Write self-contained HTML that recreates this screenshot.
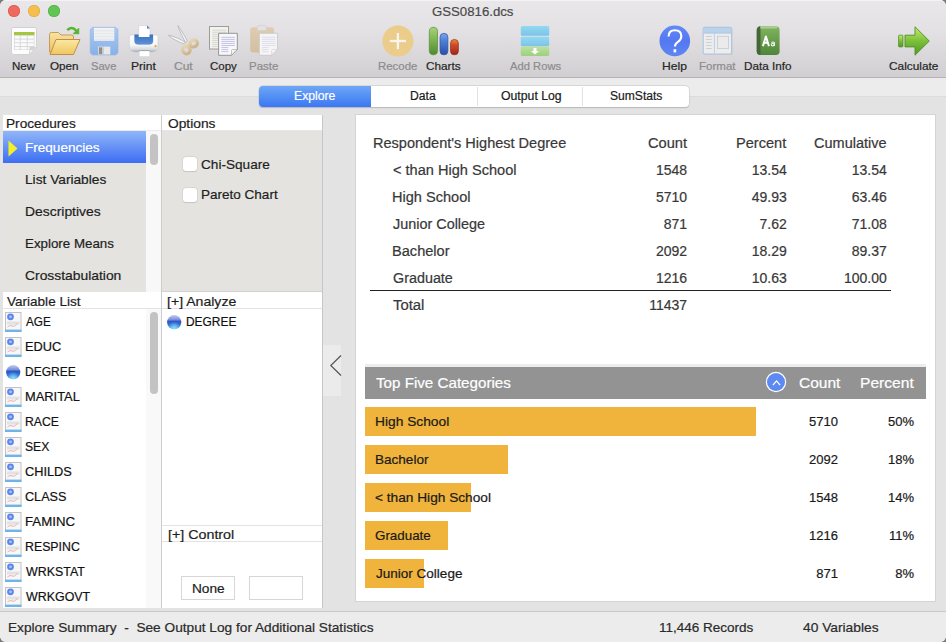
<!DOCTYPE html>
<html><head><meta charset="utf-8"><style>
html,body{margin:0;padding:0;width:946px;height:642px;overflow:hidden;background:#7a7a7a;font-family:"Liberation Sans", sans-serif;}
#win{position:absolute;left:0;top:0;width:946px;height:642px;border-radius:6px;overflow:hidden;background:#e3e3e3;}
.t{position:absolute;white-space:pre;font-family:"Liberation Sans", sans-serif;-webkit-text-stroke:0.2px currentColor;}
.r{position:absolute;}
</style></head><body><div id="win">
<div class="r" style="left:0px;top:0px;width:946px;height:77px;background:linear-gradient(#e9e7e9 0%,#e3e1e3 40%,#d1cfd1 100%);"></div>
<div class="r" style="left:0px;top:0px;width:946px;height:1px;background:#f3f3f3;"></div>
<div class="r" style="left:0px;top:77px;width:946px;height:1px;background:#b4b2b4;"></div>
<div class="r" style="left:0px;top:78px;width:946px;height:18px;background:#ececec;"></div>
<div class="r" style="left:0px;top:96px;width:946px;height:1px;background:#dcdcdc;"></div>
<div class="r" style="left:0px;top:97px;width:946px;height:514px;background:#e3e3e3;"></div>
<div class="r" style="left:0px;top:611px;width:946px;height:1px;background:#c9c9c9;"></div>
<div class="r" style="left:0px;top:612px;width:946px;height:30px;background:#ececec;"></div>
<div class="r" style="left:7.800000000000001px;top:5px;width:12px;height:12px;border-radius:50%;background:#ee6a5e;box-shadow:inset 0 0 0 0.5px #d5544a"></div>
<div class="r" style="left:27.799999999999997px;top:5px;width:12px;height:12px;border-radius:50%;background:#f5bf4f;box-shadow:inset 0 0 0 0.5px #d9a33a"></div>
<div class="r" style="left:47.8px;top:5px;width:12px;height:12px;border-radius:50%;background:#61c554;box-shadow:inset 0 0 0 0.5px #4aa73e"></div>
<div class="t" style="left:431.99px;top:5.0px;font-size:13px;line-height:13px;color:#4a4a4a;transform:scaleX(1.0152);transform-origin:0 0;">GSS0816.dcs</div>
<div class="t" style="left:12.11px;top:60.5px;font-size:11px;line-height:11px;color:#262626;transform:scaleX(1.0495);transform-origin:0 0;">New</div>
<div class="t" style="left:49.86px;top:60.5px;font-size:11px;line-height:11px;color:#262626;transform:scaleX(1.0613);transform-origin:0 0;">Open</div>
<div class="t" style="left:91.19px;top:60.5px;font-size:11px;line-height:11px;color:#8c8c8c;transform:scaleX(1.0118);transform-origin:0 0;">Save</div>
<div class="t" style="left:131.07px;top:60.5px;font-size:11px;line-height:11px;color:#262626;transform:scaleX(1.0987);transform-origin:0 0;">Print</div>
<div class="t" style="left:174.45px;top:60.5px;font-size:11px;line-height:11px;color:#8c8c8c;transform:scaleX(1.0909);transform-origin:0 0;">Cut</div>
<div class="t" style="left:210.27px;top:60.5px;font-size:11px;line-height:11px;color:#262626;transform:scaleX(1.0425);transform-origin:0 0;">Copy</div>
<div class="t" style="left:249.12px;top:60.5px;font-size:11px;line-height:11px;color:#8c8c8c;transform:scaleX(1.0439);transform-origin:0 0;">Paste</div>
<div class="t" style="left:378.12px;top:60.5px;font-size:11px;line-height:11px;color:#8c8c8c;transform:scaleX(1.0372);transform-origin:0 0;">Recode</div>
<div class="t" style="left:426.46px;top:60.5px;font-size:11px;line-height:11px;color:#262626;transform:scaleX(1.0678);transform-origin:0 0;">Charts</div>
<div class="t" style="left:509.80px;top:60.5px;font-size:11px;line-height:11px;color:#8c8c8c;transform:scaleX(1.0190);transform-origin:0 0;">Add Rows</div>
<div class="t" style="left:662.07px;top:60.5px;font-size:11px;line-height:11px;color:#262626;transform:scaleX(1.1021);transform-origin:0 0;">Help</div>
<div class="t" style="left:699.11px;top:60.5px;font-size:11px;line-height:11px;color:#8c8c8c;transform:scaleX(1.0492);transform-origin:0 0;">Format</div>
<div class="t" style="left:743.90px;top:60.5px;font-size:11px;line-height:11px;color:#262626;transform:scaleX(1.0618);transform-origin:0 0;">Data Info</div>
<div class="t" style="left:888.95px;top:60.5px;font-size:11px;line-height:11px;color:#262626;transform:scaleX(1.0772);transform-origin:0 0;">Calculate</div>
<div class="r" style="left:259px;top:86px;width:430px;height:21px;border-radius:4px;background:#fff;box-shadow:0 0 0 0.5px #c8c8c8, 0 0.5px 1px rgba(0,0,0,0.25)"></div>
<div class="r" style="left:259px;top:86px;width:112px;height:21px;border-radius:4px 0 0 4px;background:linear-gradient(#6ea7f6,#3a77f3)"></div>
<div class="r" style="left:477px;top:87px;width:1px;height:19px;background:#e2e2e2;"></div>
<div class="r" style="left:582px;top:87px;width:1px;height:19px;background:#e2e2e2;"></div>
<div class="t" style="left:293.76px;top:90.0px;font-size:12px;line-height:12px;color:#fff;transform:scaleX(1.0171);transform-origin:0 0;">Explore</div>
<div class="t" style="left:410.46px;top:90.0px;font-size:12px;line-height:12px;color:#1a1a1a;transform:scaleX(1.0138);transform-origin:0 0;">Data</div>
<div class="t" style="left:501.43px;top:90.0px;font-size:12px;line-height:12px;color:#1a1a1a;transform:scaleX(1.0213);transform-origin:0 0;">Output Log</div>
<div class="t" style="left:609.94px;top:90.0px;font-size:12px;line-height:12px;color:#1a1a1a;transform:scaleX(1.0071);transform-origin:0 0;">SumStats</div>
<div class="r" style="left:3px;top:115px;width:158px;height:15px;background:#fff;"></div>
<div class="r" style="left:3px;top:130px;width:158px;height:1px;background:#ebebeb;"></div>
<div class="r" style="left:3px;top:131px;width:143px;height:161px;background:#e4e3df;"></div>
<div class="r" style="left:146px;top:131px;width:15px;height:161px;background:#f8f8f8;"></div>
<div class="r" style="left:150px;top:134px;width:8px;height:31px;border-radius:4px;background:#c3c3c3"></div>
<div class="r" style="left:3px;top:131px;width:143px;height:32px;background:linear-gradient(#90b6f9,#3d6df3);"></div>
<svg class="r" style="left:8px;top:140px" width="10" height="17"><path d="M0.5 0.5 L9.5 8.5 L0.5 16.5 Z" fill="#f3f02a"/></svg>
<div class="t" style="left:5.85px;top:117.0px;font-size:13px;line-height:13px;color:#1e1e1e;transform:scaleX(1.0492);transform-origin:0 0;">Procedures</div>
<div class="t" style="left:24.66px;top:141.0px;font-size:13px;line-height:13px;color:#fff;transform:scaleX(1.0428);transform-origin:0 0;">Frequencies</div>
<div class="t" style="left:24.65px;top:173.0px;font-size:13px;line-height:13px;color:#1e1e1e;transform:scaleX(1.0542);transform-origin:0 0;">List Variables</div>
<div class="t" style="left:24.63px;top:205.0px;font-size:13px;line-height:13px;color:#1e1e1e;transform:scaleX(1.0692);transform-origin:0 0;">Descriptives</div>
<div class="t" style="left:24.67px;top:237.0px;font-size:13px;line-height:13px;color:#1e1e1e;transform:scaleX(1.0258);transform-origin:0 0;">Explore Means</div>
<div class="t" style="left:25.06px;top:269.0px;font-size:13px;line-height:13px;color:#1e1e1e;transform:scaleX(1.0664);transform-origin:0 0;">Crosstabulation</div>
<div class="r" style="left:161px;top:115px;width:1px;height:493px;background:#cdcdcd;"></div>
<div class="r" style="left:162px;top:115px;width:160px;height:15px;background:#fff;"></div>
<div class="r" style="left:162px;top:130px;width:160px;height:1px;background:#e6e6e6;"></div>
<div class="r" style="left:162px;top:131px;width:160px;height:160px;background:#e4e3df;"></div>
<div class="r" style="left:162px;top:291px;width:160px;height:1px;background:#d2d2d2;"></div>
<div class="t" style="left:168.16px;top:117.0px;font-size:13px;line-height:13px;color:#1e1e1e;transform:scaleX(1.0594);transform-origin:0 0;">Options</div>
<div class="r" style="left:183px;top:157px;width:14px;height:14px;border-radius:3px;background:#fff;box-shadow:0 0 0 0.5px #c9c9c9, 0 0.5px 1px rgba(0,0,0,0.15)"></div>
<div class="t" style="left:201.07px;top:158.0px;font-size:13px;line-height:13px;color:#1e1e1e;transform:scaleX(1.0464);transform-origin:0 0;">Chi-Square</div>
<div class="r" style="left:183px;top:188px;width:14px;height:14px;border-radius:3px;background:#fff;box-shadow:0 0 0 0.5px #c9c9c9, 0 0.5px 1px rgba(0,0,0,0.15)"></div>
<div class="t" style="left:200.66px;top:188.0px;font-size:13px;line-height:13px;color:#1e1e1e;transform:scaleX(1.0399);transform-origin:0 0;">Pareto Chart</div>
<div class="r" style="left:3px;top:292px;width:158px;height:16px;background:#fff;"></div>
<div class="r" style="left:3px;top:308px;width:158px;height:1px;background:#e3e3e3;"></div>
<div class="r" style="left:3px;top:309px;width:143px;height:299px;background:#fff;"></div>
<div class="r" style="left:146px;top:309px;width:15px;height:299px;background:#f9f9f9;"></div>
<div class="r" style="left:150px;top:312px;width:8px;height:82px;border-radius:4px;background:#c3c3c3"></div>
<div class="t" style="left:6.80px;top:295.0px;font-size:13px;line-height:13px;color:#1e1e1e;transform:scaleX(1.0412);transform-origin:0 0;">Variable List</div>
<svg class="r" style="left:5px;top:312px" width="17" height="20" viewBox="0 0 17 20"><rect x="0.5" y="0.5" width="15.5" height="19" fill="#f7f7f7" stroke="#c2c2c2" stroke-width="1"/><circle cx="5.5" cy="4.8" r="3.4" fill="#5a86ee"/><circle cx="5.5" cy="4.8" r="1.4" fill="#aac4fa"/><rect x="2" y="9.5" width="12.5" height="3" fill="#e2e2e2"/><path d="M2.5 15 Q5 12.5 7 14 T12.5 11.5" stroke="#eaa8a8" stroke-width="0.9" fill="none"/><rect x="0" y="17.6" width="16.5" height="2.4" fill="#6fb4e6"/></svg>
<div class="t" style="left:25.70px;top:315.0px;font-size:13px;line-height:13px;color:#111;transform:scaleX(0.9033);transform-origin:0 0;">AGE</div>
<svg class="r" style="left:5px;top:337px" width="17" height="20" viewBox="0 0 17 20"><rect x="0.5" y="0.5" width="15.5" height="19" fill="#f7f7f7" stroke="#c2c2c2" stroke-width="1"/><circle cx="5.5" cy="4.8" r="3.4" fill="#5a86ee"/><circle cx="5.5" cy="4.8" r="1.4" fill="#aac4fa"/><rect x="2" y="9.5" width="12.5" height="3" fill="#e2e2e2"/><path d="M2.5 15 Q5 12.5 7 14 T12.5 11.5" stroke="#eaa8a8" stroke-width="0.9" fill="none"/><rect x="0" y="17.6" width="16.5" height="2.4" fill="#6fb4e6"/></svg>
<div class="t" style="left:24.72px;top:340.0px;font-size:13px;line-height:13px;color:#111;transform:scaleX(0.9830);transform-origin:0 0;">EDUC</div>
<svg class="r" style="left:6px;top:364.5px" width="15" height="15" viewBox="0 0 15 15"><defs><linearGradient id="sg2" x1="0" y1="0" x2="0" y2="1"><stop offset="0" stop-color="#c4cbec"/><stop offset="0.3" stop-color="#7f94dc"/><stop offset="0.45" stop-color="#2f56c6"/><stop offset="0.75" stop-color="#3a7ad8"/><stop offset="1" stop-color="#5cb8ee"/></linearGradient><radialGradient id="rg2" cx="0.5" cy="0.92" r="0.45"><stop offset="0" stop-color="#80e0fb" stop-opacity="1"/><stop offset="1" stop-color="#80e0fb" stop-opacity="0"/></radialGradient></defs><circle cx="7.2" cy="7.2" r="7.1" fill="url(#sg2)"/><circle cx="7.2" cy="7.2" r="7.1" fill="url(#rg2)"/></svg>
<div class="t" style="left:24.78px;top:365.0px;font-size:13px;line-height:13px;color:#111;transform:scaleX(0.9231);transform-origin:0 0;">DEGREE</div>
<svg class="r" style="left:5px;top:387px" width="17" height="20" viewBox="0 0 17 20"><rect x="0.5" y="0.5" width="15.5" height="19" fill="#f7f7f7" stroke="#c2c2c2" stroke-width="1"/><circle cx="5.5" cy="4.8" r="3.4" fill="#5a86ee"/><circle cx="5.5" cy="4.8" r="1.4" fill="#aac4fa"/><rect x="2" y="9.5" width="12.5" height="3" fill="#e2e2e2"/><path d="M2.5 15 Q5 12.5 7 14 T12.5 11.5" stroke="#eaa8a8" stroke-width="0.9" fill="none"/><rect x="0" y="17.6" width="16.5" height="2.4" fill="#6fb4e6"/></svg>
<div class="t" style="left:24.71px;top:390.0px;font-size:13px;line-height:13px;color:#111;transform:scaleX(0.9907);transform-origin:0 0;">MARITAL</div>
<svg class="r" style="left:5px;top:412px" width="17" height="20" viewBox="0 0 17 20"><rect x="0.5" y="0.5" width="15.5" height="19" fill="#f7f7f7" stroke="#c2c2c2" stroke-width="1"/><circle cx="5.5" cy="4.8" r="3.4" fill="#5a86ee"/><circle cx="5.5" cy="4.8" r="1.4" fill="#aac4fa"/><rect x="2" y="9.5" width="12.5" height="3" fill="#e2e2e2"/><path d="M2.5 15 Q5 12.5 7 14 T12.5 11.5" stroke="#eaa8a8" stroke-width="0.9" fill="none"/><rect x="0" y="17.6" width="16.5" height="2.4" fill="#6fb4e6"/></svg>
<div class="t" style="left:24.76px;top:415.0px;font-size:13px;line-height:13px;color:#111;transform:scaleX(0.9391);transform-origin:0 0;">RACE</div>
<svg class="r" style="left:5px;top:437px" width="17" height="20" viewBox="0 0 17 20"><rect x="0.5" y="0.5" width="15.5" height="19" fill="#f7f7f7" stroke="#c2c2c2" stroke-width="1"/><circle cx="5.5" cy="4.8" r="3.4" fill="#5a86ee"/><circle cx="5.5" cy="4.8" r="1.4" fill="#aac4fa"/><rect x="2" y="9.5" width="12.5" height="3" fill="#e2e2e2"/><path d="M2.5 15 Q5 12.5 7 14 T12.5 11.5" stroke="#eaa8a8" stroke-width="0.9" fill="none"/><rect x="0" y="17.6" width="16.5" height="2.4" fill="#6fb4e6"/></svg>
<div class="t" style="left:25.14px;top:440.0px;font-size:13px;line-height:13px;color:#111;transform:scaleX(0.9363);transform-origin:0 0;">SEX</div>
<svg class="r" style="left:5px;top:462px" width="17" height="20" viewBox="0 0 17 20"><rect x="0.5" y="0.5" width="15.5" height="19" fill="#f7f7f7" stroke="#c2c2c2" stroke-width="1"/><circle cx="5.5" cy="4.8" r="3.4" fill="#5a86ee"/><circle cx="5.5" cy="4.8" r="1.4" fill="#aac4fa"/><rect x="2" y="9.5" width="12.5" height="3" fill="#e2e2e2"/><path d="M2.5 15 Q5 12.5 7 14 T12.5 11.5" stroke="#eaa8a8" stroke-width="0.9" fill="none"/><rect x="0" y="17.6" width="16.5" height="2.4" fill="#6fb4e6"/></svg>
<div class="t" style="left:25.11px;top:465.0px;font-size:13px;line-height:13px;color:#111;transform:scaleX(0.9828);transform-origin:0 0;">CHILDS</div>
<svg class="r" style="left:5px;top:487px" width="17" height="20" viewBox="0 0 17 20"><rect x="0.5" y="0.5" width="15.5" height="19" fill="#f7f7f7" stroke="#c2c2c2" stroke-width="1"/><circle cx="5.5" cy="4.8" r="3.4" fill="#5a86ee"/><circle cx="5.5" cy="4.8" r="1.4" fill="#aac4fa"/><rect x="2" y="9.5" width="12.5" height="3" fill="#e2e2e2"/><path d="M2.5 15 Q5 12.5 7 14 T12.5 11.5" stroke="#eaa8a8" stroke-width="0.9" fill="none"/><rect x="0" y="17.6" width="16.5" height="2.4" fill="#6fb4e6"/></svg>
<div class="t" style="left:25.12px;top:490.0px;font-size:13px;line-height:13px;color:#111;transform:scaleX(0.9711);transform-origin:0 0;">CLASS</div>
<svg class="r" style="left:5px;top:512px" width="17" height="20" viewBox="0 0 17 20"><rect x="0.5" y="0.5" width="15.5" height="19" fill="#f7f7f7" stroke="#c2c2c2" stroke-width="1"/><circle cx="5.5" cy="4.8" r="3.4" fill="#5a86ee"/><circle cx="5.5" cy="4.8" r="1.4" fill="#aac4fa"/><rect x="2" y="9.5" width="12.5" height="3" fill="#e2e2e2"/><path d="M2.5 15 Q5 12.5 7 14 T12.5 11.5" stroke="#eaa8a8" stroke-width="0.9" fill="none"/><rect x="0" y="17.6" width="16.5" height="2.4" fill="#6fb4e6"/></svg>
<div class="t" style="left:24.68px;top:515.0px;font-size:13px;line-height:13px;color:#111;transform:scaleX(1.0189);transform-origin:0 0;">FAMINC</div>
<svg class="r" style="left:5px;top:537px" width="17" height="20" viewBox="0 0 17 20"><rect x="0.5" y="0.5" width="15.5" height="19" fill="#f7f7f7" stroke="#c2c2c2" stroke-width="1"/><circle cx="5.5" cy="4.8" r="3.4" fill="#5a86ee"/><circle cx="5.5" cy="4.8" r="1.4" fill="#aac4fa"/><rect x="2" y="9.5" width="12.5" height="3" fill="#e2e2e2"/><path d="M2.5 15 Q5 12.5 7 14 T12.5 11.5" stroke="#eaa8a8" stroke-width="0.9" fill="none"/><rect x="0" y="17.6" width="16.5" height="2.4" fill="#6fb4e6"/></svg>
<div class="t" style="left:24.75px;top:540.0px;font-size:13px;line-height:13px;color:#111;transform:scaleX(0.9485);transform-origin:0 0;">RESPINC</div>
<svg class="r" style="left:5px;top:562px" width="17" height="20" viewBox="0 0 17 20"><rect x="0.5" y="0.5" width="15.5" height="19" fill="#f7f7f7" stroke="#c2c2c2" stroke-width="1"/><circle cx="5.5" cy="4.8" r="3.4" fill="#5a86ee"/><circle cx="5.5" cy="4.8" r="1.4" fill="#aac4fa"/><rect x="2" y="9.5" width="12.5" height="3" fill="#e2e2e2"/><path d="M2.5 15 Q5 12.5 7 14 T12.5 11.5" stroke="#eaa8a8" stroke-width="0.9" fill="none"/><rect x="0" y="17.6" width="16.5" height="2.4" fill="#6fb4e6"/></svg>
<div class="t" style="left:25.70px;top:565.0px;font-size:13px;line-height:13px;color:#111;transform:scaleX(0.9544);transform-origin:0 0;">WRKSTAT</div>
<svg class="r" style="left:5px;top:587px" width="17" height="20" viewBox="0 0 17 20"><rect x="0.5" y="0.5" width="15.5" height="19" fill="#f7f7f7" stroke="#c2c2c2" stroke-width="1"/><circle cx="5.5" cy="4.8" r="3.4" fill="#5a86ee"/><circle cx="5.5" cy="4.8" r="1.4" fill="#aac4fa"/><rect x="2" y="9.5" width="12.5" height="3" fill="#e2e2e2"/><path d="M2.5 15 Q5 12.5 7 14 T12.5 11.5" stroke="#eaa8a8" stroke-width="0.9" fill="none"/><rect x="0" y="17.6" width="16.5" height="2.4" fill="#6fb4e6"/></svg>
<div class="t" style="left:25.70px;top:590.0px;font-size:13px;line-height:13px;color:#111;transform:scaleX(0.9552);transform-origin:0 0;">WRKGOVT</div>
<div class="r" style="left:162px;top:292px;width:160px;height:16px;background:#fff;"></div>
<div class="r" style="left:162px;top:308px;width:160px;height:1px;background:#e3e3e3;"></div>
<div class="r" style="left:162px;top:309px;width:160px;height:216px;background:#fff;"></div>
<div class="t" style="left:167.33px;top:295.0px;font-size:13px;line-height:13px;color:#1e1e1e;transform:scaleX(1.0832);transform-origin:0 0;">[+] Analyze</div>
<svg class="r" style="left:167px;top:314.5px" width="15" height="15" viewBox="0 0 15 15"><defs><linearGradient id="sga" x1="0" y1="0" x2="0" y2="1"><stop offset="0" stop-color="#c4cbec"/><stop offset="0.3" stop-color="#7f94dc"/><stop offset="0.45" stop-color="#2f56c6"/><stop offset="0.75" stop-color="#3a7ad8"/><stop offset="1" stop-color="#5cb8ee"/></linearGradient><radialGradient id="rga" cx="0.5" cy="0.92" r="0.45"><stop offset="0" stop-color="#80e0fb" stop-opacity="1"/><stop offset="1" stop-color="#80e0fb" stop-opacity="0"/></radialGradient></defs><circle cx="7.2" cy="7.2" r="7.1" fill="url(#sga)"/><circle cx="7.2" cy="7.2" r="7.1" fill="url(#rga)"/></svg>
<div class="t" style="left:186.08px;top:315.0px;font-size:13px;line-height:13px;color:#111;transform:scaleX(0.9174);transform-origin:0 0;">DEGREE</div>
<div class="r" style="left:162px;top:525px;width:160px;height:1px;background:#e3e3e3;"></div>
<div class="r" style="left:162px;top:526px;width:160px;height:15px;background:#fff;"></div>
<div class="r" style="left:162px;top:541px;width:160px;height:1px;background:#e3e3e3;"></div>
<div class="r" style="left:162px;top:542px;width:160px;height:66px;background:#fff;"></div>
<div class="t" style="left:167.81px;top:528.0px;font-size:13px;line-height:13px;color:#1e1e1e;transform:scaleX(1.0974);transform-origin:0 0;">[+] Control</div>
<div class="r" style="left:182px;top:577px;width:52px;height:22px;background:#fff;box-shadow:0 0 0 1px #d6d6d6"></div>
<div class="t" style="left:191.65px;top:582.0px;font-size:13px;line-height:13px;color:#1e1e1e;transform:scaleX(1.0508);transform-origin:0 0;">None</div>
<div class="r" style="left:250px;top:577px;width:52px;height:22px;background:#fff;box-shadow:0 0 0 1px #d6d6d6"></div>
<div class="r" style="left:322px;top:115px;width:1px;height:493px;background:#c6c6c6;"></div>
<div class="r" style="left:323px;top:345px;width:18px;height:51px;background:#ebebeb;"></div>
<svg class="r" style="left:329px;top:354px" width="14" height="24"><path d="M12 1.5 L1.8 11.5 L12 21.5" stroke="#555" stroke-width="1.2" fill="none"/></svg>
<div class="r" style="left:355px;top:114px;width:581px;height:488px;background:#d4d4d4;"></div>
<div class="r" style="left:356px;top:115px;width:579px;height:486px;background:#fff;"></div>
<div class="t" style="left:373.38px;top:136.0px;font-size:14px;line-height:14px;color:#383838;transform:scaleX(1.0369);transform-origin:0 0;">Respondent's Highest Degree</div>
<div class="t" style="left:647.62px;top:136.0px;font-size:14px;line-height:14px;color:#383838;transform:scaleX(1.0460);transform-origin:0 0;">Count</div>
<div class="t" style="left:736.18px;top:136.0px;font-size:14px;line-height:14px;color:#383838;transform:scaleX(1.0412);transform-origin:0 0;">Percent</div>
<div class="t" style="left:814.33px;top:136.0px;font-size:14px;line-height:14px;color:#383838;transform:scaleX(1.0361);transform-origin:0 0;">Cumulative</div>
<div class="t" style="left:392.93px;top:163.0px;font-size:14px;line-height:14px;color:#383838;transform:scaleX(1.0405);transform-origin:0 0;">&lt; than High School</div>
<div class="t" style="left:567.1px;top:163.0px;font-size:14px;line-height:14px;color:#383838;width:120px;text-align:right;">1548</div>
<div class="t" style="left:666.8px;top:163.0px;font-size:14px;line-height:14px;color:#383838;width:120px;text-align:right;">13.54</div>
<div class="t" style="left:766.8px;top:163.0px;font-size:14px;line-height:14px;color:#383838;width:120px;text-align:right;">13.54</div>
<div class="t" style="left:392.48px;top:190.0px;font-size:14px;line-height:14px;color:#383838;transform:scaleX(1.0402);transform-origin:0 0;">High School</div>
<div class="t" style="left:567.1px;top:190.0px;font-size:14px;line-height:14px;color:#383838;width:120px;text-align:right;">5710</div>
<div class="t" style="left:666.8px;top:190.0px;font-size:14px;line-height:14px;color:#383838;width:120px;text-align:right;">49.93</div>
<div class="t" style="left:766.8px;top:190.0px;font-size:14px;line-height:14px;color:#383838;width:120px;text-align:right;">63.46</div>
<div class="t" style="left:393.38px;top:217.0px;font-size:14px;line-height:14px;color:#383838;transform:scaleX(1.0289);transform-origin:0 0;">Junior College</div>
<div class="t" style="left:567.1px;top:217.0px;font-size:14px;line-height:14px;color:#383838;width:120px;text-align:right;">871</div>
<div class="t" style="left:666.8px;top:217.0px;font-size:14px;line-height:14px;color:#383838;width:120px;text-align:right;">7.62</div>
<div class="t" style="left:766.8px;top:217.0px;font-size:14px;line-height:14px;color:#383838;width:120px;text-align:right;">71.08</div>
<div class="t" style="left:392.48px;top:244.0px;font-size:14px;line-height:14px;color:#383838;transform:scaleX(1.0416);transform-origin:0 0;">Bachelor</div>
<div class="t" style="left:567.1px;top:244.0px;font-size:14px;line-height:14px;color:#383838;width:120px;text-align:right;">2092</div>
<div class="t" style="left:666.8px;top:244.0px;font-size:14px;line-height:14px;color:#383838;width:120px;text-align:right;">18.29</div>
<div class="t" style="left:766.8px;top:244.0px;font-size:14px;line-height:14px;color:#383838;width:120px;text-align:right;">89.37</div>
<div class="t" style="left:392.94px;top:271.0px;font-size:14px;line-height:14px;color:#383838;transform:scaleX(1.0248);transform-origin:0 0;">Graduate</div>
<div class="t" style="left:567.1px;top:271.0px;font-size:14px;line-height:14px;color:#383838;width:120px;text-align:right;">1216</div>
<div class="t" style="left:666.8px;top:271.0px;font-size:14px;line-height:14px;color:#383838;width:120px;text-align:right;">10.63</div>
<div class="t" style="left:766.8px;top:271.0px;font-size:14px;line-height:14px;color:#383838;width:120px;text-align:right;">100.00</div>
<div class="r" style="left:370px;top:290px;width:521px;height:1px;background:#222;"></div>
<div class="t" style="left:393.36px;top:298.0px;font-size:14px;line-height:14px;color:#383838;transform:scaleX(1.0627);transform-origin:0 0;">Total</div>
<div class="t" style="left:567.1px;top:298.0px;font-size:14px;line-height:14px;color:#383838;width:120px;text-align:right;">11437</div>
<div class="r" style="left:365px;top:364px;width:561px;height:3px;background:#ededed;"></div>
<div class="r" style="left:365px;top:367px;width:561px;height:32px;background:#939393;"></div>
<div class="t" style="left:375.65px;top:375.0px;font-size:15px;line-height:15px;color:#fff;transform:scaleX(1.0107);transform-origin:0 0;">Top Five Categories</div>
<div class="r" style="left:767px;top:373px;width:18px;height:18px;border-radius:50%;background:#5d89f2;box-shadow:0 0 0 1.2px #fff"></div>
<svg class="r" style="left:771px;top:377px" width="12" height="12"><path d="M1.9 8.1 L5.5 3.9 L9.1 8.1" stroke="#fff" stroke-width="1.3" fill="none"/></svg>
<div class="t" style="left:799.08px;top:375.0px;font-size:15px;line-height:15px;color:#fff;transform:scaleX(1.0349);transform-origin:0 0;">Count</div>
<div class="t" style="left:859.80px;top:375.0px;font-size:15px;line-height:15px;color:#fff;transform:scaleX(1.0392);transform-origin:0 0;">Percent</div>
<div class="r" style="left:365px;top:407px;width:391px;height:29px;background:#f0b43c;"></div>
<div class="t" style="left:374.74px;top:415.0px;font-size:13px;line-height:13px;color:#1a1a1a;transform:scaleX(1.0587);transform-origin:0 0;">High School</div>
<div class="t" style="left:758px;top:415.0px;font-size:13px;line-height:13px;color:#1a1a1a;width:80px;text-align:right;">5710</div>
<div class="t" style="left:834px;top:415.0px;font-size:13px;line-height:13px;color:#1a1a1a;width:80px;text-align:right;">50%</div>
<div class="r" style="left:365px;top:445px;width:143px;height:29px;background:#f0b43c;"></div>
<div class="t" style="left:374.76px;top:453.0px;font-size:13px;line-height:13px;color:#1a1a1a;transform:scaleX(1.0419);transform-origin:0 0;">Bachelor</div>
<div class="t" style="left:758px;top:453.0px;font-size:13px;line-height:13px;color:#1a1a1a;width:80px;text-align:right;">2092</div>
<div class="t" style="left:834px;top:453.0px;font-size:13px;line-height:13px;color:#1a1a1a;width:80px;text-align:right;">18%</div>
<div class="r" style="left:365px;top:483px;width:106px;height:29px;background:#f0b43c;"></div>
<div class="t" style="left:375.17px;top:491.0px;font-size:13px;line-height:13px;color:#1a1a1a;transform:scaleX(1.0524);transform-origin:0 0;">&lt; than High School</div>
<div class="t" style="left:758px;top:491.0px;font-size:13px;line-height:13px;color:#1a1a1a;width:80px;text-align:right;">1548</div>
<div class="t" style="left:834px;top:491.0px;font-size:13px;line-height:13px;color:#1a1a1a;width:80px;text-align:right;">14%</div>
<div class="r" style="left:365px;top:521px;width:83px;height:29px;background:#f0b43c;"></div>
<div class="t" style="left:375.18px;top:529.0px;font-size:13px;line-height:13px;color:#1a1a1a;transform:scaleX(1.0282);transform-origin:0 0;">Graduate</div>
<div class="t" style="left:758px;top:529.0px;font-size:13px;line-height:13px;color:#1a1a1a;width:80px;text-align:right;">1216</div>
<div class="t" style="left:834px;top:529.0px;font-size:13px;line-height:13px;color:#1a1a1a;width:80px;text-align:right;">11%</div>
<div class="r" style="left:365px;top:559px;width:59px;height:29px;background:#f0b43c;"></div>
<div class="t" style="left:375.59px;top:567.0px;font-size:13px;line-height:13px;color:#1a1a1a;transform:scaleX(1.0400);transform-origin:0 0;">Junior College</div>
<div class="t" style="left:758px;top:567.0px;font-size:13px;line-height:13px;color:#1a1a1a;width:80px;text-align:right;">871</div>
<div class="t" style="left:834px;top:567.0px;font-size:13px;line-height:13px;color:#1a1a1a;width:80px;text-align:right;">8%</div>
<div class="t" style="left:7.55px;top:621.0px;font-size:13px;line-height:13px;color:#2a2a2a;transform:scaleX(1.0517);transform-origin:0 0;">Explore Summary &nbsp;- &nbsp;See Output Log for Additional Statistics</div>
<div class="t" style="left:658.76px;top:621.0px;font-size:13px;line-height:13px;color:#2a2a2a;transform:scaleX(1.0391);transform-origin:0 0;">11,446 Records</div>
<div class="t" style="left:802.68px;top:621.0px;font-size:13px;line-height:13px;color:#2a2a2a;transform:scaleX(1.0595);transform-origin:0 0;">40 Variables</div>
<svg class="r" style="left:0px;top:20px" width="946" height="40" viewBox="0 20 946 40">
<defs>
<linearGradient id="gFold" x1="0" y1="0" x2="1" y2="1"><stop offset="0" stop-color="#fff"/><stop offset="1" stop-color="#d8d8d8"/></linearGradient>
<linearGradient id="gFolderF" x1="0" y1="0" x2="0" y2="1"><stop offset="0" stop-color="#fbe8a6"/><stop offset="1" stop-color="#f0c75e"/></linearGradient>
<linearGradient id="gFolderB" x1="0" y1="0" x2="0" y2="1"><stop offset="0" stop-color="#f7e3a4"/><stop offset="1" stop-color="#e9c468"/></linearGradient>
<linearGradient id="gSave" x1="0" y1="0" x2="0" y2="1"><stop offset="0" stop-color="#a9caf1"/><stop offset="1" stop-color="#86b1e8"/></linearGradient>
<linearGradient id="gPrn" x1="0" y1="0" x2="0" y2="1"><stop offset="0" stop-color="#ffffff"/><stop offset="0.6" stop-color="#f3f5f7"/><stop offset="0.85" stop-color="#d6dade"/><stop offset="1" stop-color="#9aa0a8"/></linearGradient>
<linearGradient id="gTray" x1="0" y1="0" x2="0" y2="1"><stop offset="0" stop-color="#3a6fc0"/><stop offset="1" stop-color="#5b93d8"/></linearGradient>
<linearGradient id="gRing" x1="0" y1="0" x2="0" y2="1"><stop offset="0" stop-color="#e6d3b0"/><stop offset="1" stop-color="#cdb48a"/></linearGradient>
<linearGradient id="gClip" x1="0" y1="0" x2="0" y2="1"><stop offset="0" stop-color="#dfcdb2"/><stop offset="1" stop-color="#d3bf9f"/></linearGradient>
<linearGradient id="gGreen" x1="0" y1="0" x2="0" y2="1"><stop offset="0" stop-color="#a6d27c"/><stop offset="0.35" stop-color="#86bc5a"/><stop offset="1" stop-color="#4e8a2e"/></linearGradient>
<linearGradient id="gBlue" x1="0" y1="0" x2="0" y2="1"><stop offset="0" stop-color="#7aa6ea"/><stop offset="0.35" stop-color="#4f80d8"/><stop offset="1" stop-color="#2a4fa6"/></linearGradient>
<linearGradient id="gRed" x1="0" y1="0" x2="0" y2="1"><stop offset="0" stop-color="#f08a3a"/><stop offset="0.35" stop-color="#d04a28"/><stop offset="1" stop-color="#a02818"/></linearGradient>
<linearGradient id="gRowB" x1="0" y1="0" x2="0" y2="1"><stop offset="0" stop-color="#92daf0"/><stop offset="1" stop-color="#7cc2ea"/></linearGradient>
<linearGradient id="gRowG" x1="0" y1="0" x2="0" y2="1"><stop offset="0" stop-color="#bce0a0"/><stop offset="1" stop-color="#9ccf7c"/></linearGradient>
<linearGradient id="gHelp" x1="0" y1="0" x2="0" y2="1"><stop offset="0" stop-color="#628af5"/><stop offset="0.5" stop-color="#5478f0"/><stop offset="1" stop-color="#5f86f3"/></linearGradient>
<linearGradient id="gInfo" x1="0" y1="0" x2="0" y2="1"><stop offset="0" stop-color="#80b460"/><stop offset="1" stop-color="#4f853a"/></linearGradient>
<linearGradient id="gCalc" x1="0" y1="0" x2="0" y2="1"><stop offset="0" stop-color="#c6ee6a"/><stop offset="0.5" stop-color="#7cc03a"/><stop offset="1" stop-color="#4f9a22"/></linearGradient>
</defs>
<!-- New -->
<path d="M13.5 27.5 H34.5 Q36.5 27.5 36.5 29.5 V47.5 L29.5 54.5 H13.5 Q11.5 54.5 11.5 52.5 V29.5 Q11.5 27.5 13.5 27.5 Z" fill="#fcfcfc" stroke="#d2d2d2" stroke-width="1"/>
<path d="M36.5 47.5 L31.5 47.5 Q29.5 47.5 29.5 49.5 L29.5 54.5 Z" fill="url(#gFold)" stroke="#cfcfcf" stroke-width="0.8"/>
<rect x="14" y="32" width="20.5" height="3" fill="#a6c63c"/>
<rect x="14" y="35" width="20.5" height="15" fill="#d3d3d3"/>
<g fill="#fafafa">
<rect x="14.6" y="35.8" width="5.2" height="2.9"/><rect x="20.6" y="35.8" width="6.2" height="2.9"/><rect x="27.6" y="35.8" width="6.2" height="2.9"/>
<rect x="14.6" y="39.5" width="5.2" height="2.9"/><rect x="20.6" y="39.5" width="6.2" height="2.9"/><rect x="27.6" y="39.5" width="6.2" height="2.9"/>
<rect x="14.6" y="43.2" width="5.2" height="2.9"/><rect x="20.6" y="43.2" width="6.2" height="2.9"/><rect x="27.6" y="43.2" width="6.2" height="2.9"/>
<rect x="14.6" y="46.9" width="5.2" height="2.6"/><rect x="20.6" y="46.9" width="6.2" height="2.6"/><rect x="27.6" y="46.9" width="2" height="2.6"/>
</g>
<!-- Open -->
<path d="M49.5 34.5 Q49.5 32.5 51.5 32.5 H58.5 L61 35 H71.5 Q73.5 35 73.5 37 V52 H49.5 Z" fill="url(#gFolderB)" stroke="#c99c52" stroke-width="1"/>
<path d="M50 54.5 L56 39.5 H80 L73.5 54.5 Z" fill="url(#gFolderF)" stroke="#c48f45" stroke-width="1" stroke-linejoin="round"/>
<path d="M67.3 30.2 Q71.5 25.6 76.2 30.6" stroke="#55b430" stroke-width="2.6" fill="none"/>
<path d="M78.9 28 L78.9 33.9 L73 33.7 Z" fill="#55b430" stroke="#55b430" stroke-width="0.6" stroke-linejoin="round"/>
<!-- Save -->
<path d="M92.5 27.3 H115.8 L118 29.5 V52.8 L115.8 55 H92.5 L90.2 52.8 V29.5 Z" fill="url(#gSave)" stroke="#92b6e2" stroke-width="0.6"/>
<rect x="94" y="27.9" width="20.3" height="12.9" fill="#f1f2f4"/>
<g stroke="#dfe1e5" stroke-width="0.8"><line x1="94.5" y1="30.8" x2="114" y2="30.8"/><line x1="94.5" y1="33.6" x2="114" y2="33.6"/><line x1="94.5" y1="36.4" x2="114" y2="36.4"/><line x1="94.5" y1="39.1" x2="114" y2="39.1"/></g>
<rect x="98" y="46.6" width="12.3" height="7.9" fill="#e8e8e8"/>
<rect x="98.8" y="47.3" width="3.4" height="6.8" fill="#8e9092"/>
<rect x="102.2" y="47.3" width="1.6" height="6.8" fill="#c4c6c8"/>
<!-- Print -->
<path d="M138.7 25.5 H147 L150 28.5 V38 H138.7 Z" fill="#fff" stroke="#d0d0d0" stroke-width="0.6"/>
<path d="M147 25.5 L150 28.5 H147 Z" fill="#4a7cc8"/>
<path d="M131 35 Q129.5 35 129.3 37 L129.3 47 Q129.5 51.5 135 52 H152 Q157.8 51.5 158 47 V37 Q157.8 35 156.5 35 H153 V41 Q153 44.5 149 44.5 H138.5 Q134.5 44.5 134.5 41 V35 Z" fill="url(#gPrn)" stroke="#c8ccd2" stroke-width="0.6"/>
<path d="M134.5 34.5 H153 V41 Q153 44.5 149 44.5 H138.5 Q134.5 44.5 134.5 41 Z" fill="url(#gTray)"/>
<rect x="138.7" y="33.5" width="10.8" height="3.5" fill="#fff"/>
<circle cx="155.6" cy="46.2" r="1.1" fill="#f0a030"/>
<rect x="139.2" y="50.2" width="10.5" height="6.3" fill="#fff" stroke="#d6d6d6" stroke-width="0.5"/><line x1="139.2" y1="50.6" x2="149.7" y2="50.6" stroke="#8a9098" stroke-width="0.8"/>
<!-- Cut -->
<path d="M168.4 35.3 C174 36.2 181 39.3 185.2 42.3 L183.8 43.8 C178 41.8 172 38.6 168.4 35.3 Z" fill="#f3f4f6" stroke="#a9adb2" stroke-width="0.7" stroke-linejoin="round"/>
<path d="M177.9 25.6 C181.2 30 184.6 35.8 187.2 40.8 L185.4 42.2 C182.6 37.2 179.6 31.2 177.9 25.6 Z" fill="#f3f4f6" stroke="#a9adb2" stroke-width="0.7" stroke-linejoin="round"/>
<ellipse cx="186.3" cy="49.8" rx="3.7" ry="4.1" transform="rotate(-25 186.3 49.8)" fill="none" stroke="url(#gRing)" stroke-width="3.2"/>
<ellipse cx="193.6" cy="43.4" rx="3.9" ry="3.5" transform="rotate(-30 193.6 43.4)" fill="none" stroke="url(#gRing)" stroke-width="3.2"/>
<!-- Copy -->
<rect x="209.5" y="26.5" width="19" height="22.5" fill="#f3f3ee" stroke="#9c9c9c" stroke-width="1"/>
<g stroke="#d2d4cc" stroke-width="0.9"><line x1="212.2" y1="30.20" x2="226.3" y2="30.20"/><line x1="212.2" y1="32.25" x2="226.3" y2="32.25"/><line x1="212.2" y1="34.30" x2="226.3" y2="34.30"/><line x1="212.2" y1="36.35" x2="226.3" y2="36.35"/><line x1="212.2" y1="38.40" x2="226.3" y2="38.40"/><line x1="212.2" y1="40.45" x2="226.3" y2="40.45"/><line x1="212.2" y1="42.50" x2="226.3" y2="42.50"/><line x1="212.2" y1="44.55" x2="226.3" y2="44.55"/><line x1="212.2" y1="46.60" x2="226.3" y2="46.60"/></g>
<path d="M218.6 33.3 H237.3 V49.5 L231.5 55.3 H218.6 Z" fill="#f8f8fb" stroke="#959595" stroke-width="1"/>
<path d="M237.3 49.5 H232.5 Q231.5 49.5 231.5 50.5 V55.3 Z" fill="url(#gFold)" stroke="#a0a0a0" stroke-width="0.6"/>
<g stroke="#bcbce2" stroke-width="0.9"><line x1="221.3" y1="37.30" x2="234.9" y2="37.30"/><line x1="221.3" y1="39.35" x2="234.9" y2="39.35"/><line x1="221.3" y1="41.40" x2="234.9" y2="41.40"/><line x1="221.3" y1="43.45" x2="234.9" y2="43.45"/><line x1="221.3" y1="45.50" x2="234.9" y2="45.50"/><line x1="221.3" y1="47.55" x2="228.3" y2="47.55"/><line x1="221.3" y1="49.60" x2="228.3" y2="49.60"/><line x1="221.3" y1="51.65" x2="228.3" y2="51.65"/></g>
<!-- Paste -->
<rect x="250.2" y="27.2" width="23.8" height="25.3" rx="3" fill="url(#gClip)"/>
<path d="M257.2 30.5 V27.3 Q257.2 25.4 259.2 25.4 H264.4 Q266.4 25.4 266.4 27.3 V30.5 Z" fill="#e2e2e2" stroke="#cdcdcd" stroke-width="0.6"/>
<path d="M259.3 33.3 H277.5 V49.5 L271.7 55.3 H259.3 Z" fill="#f5f5f5" stroke="#c9c9c9" stroke-width="0.9"/>
<path d="M277.5 49.5 H272.7 Q271.7 49.5 271.7 50.5 V55.3 Z" fill="url(#gFold)" stroke="#cccccc" stroke-width="0.6"/>
<g stroke="#dcdcec" stroke-width="0.9"><line x1="262.0" y1="37.30" x2="275.5" y2="37.30"/><line x1="262.0" y1="39.35" x2="275.5" y2="39.35"/><line x1="262.0" y1="41.40" x2="275.5" y2="41.40"/><line x1="262.0" y1="43.45" x2="275.5" y2="43.45"/><line x1="262.0" y1="45.50" x2="275.5" y2="45.50"/><line x1="262.0" y1="47.55" x2="268.5" y2="47.55"/><line x1="262.0" y1="49.60" x2="268.5" y2="49.60"/><line x1="262.0" y1="51.65" x2="268.5" y2="51.65"/></g>
<!-- Recode -->
<circle cx="397.9" cy="41" r="15.5" fill="#eccc8a"/>
<rect x="389.8" y="39.85" width="16.2" height="2.3" fill="#f8f4ee"/>
<rect x="396.75" y="33" width="2.3" height="16.2" fill="#f8f4ee"/>
<!-- Charts -->
<rect x="429.3" y="27.3" width="8.2" height="27.5" rx="4.1" fill="url(#gGreen)" stroke="#5a8a3e" stroke-width="0.7"/>
<rect x="440" y="33.3" width="7.9" height="21.5" rx="3.9" fill="url(#gBlue)" stroke="#34559a" stroke-width="0.7"/>
<rect x="450.5" y="39.4" width="7.9" height="15.4" rx="3.9" fill="url(#gRed)" stroke="#8e3020" stroke-width="0.7"/>
<!-- Add Rows -->
<rect x="520.8" y="25.9" width="28.4" height="9.9" rx="1.5" fill="url(#gRowB)"/>
<rect x="520.8" y="36.7" width="28.4" height="9.5" rx="1.5" fill="url(#gRowB)"/>
<rect x="520.8" y="46.6" width="28.4" height="9.5" rx="1.5" fill="url(#gRowG)"/>
<rect x="533.5" y="48" width="3" height="3.5" fill="#fff"/>
<path d="M531 51 H539 L535 54.5 Z" fill="#fff"/>
<!-- Help -->
<circle cx="674.8" cy="40.9" r="15.3" fill="url(#gHelp)"/>
<path d="M668.6 36.6 Q668.6 30.3 674.9 30.3 Q681.3 30.3 681.3 36.2 Q681.3 39.6 677.9 41.8 Q675 43.6 675 46.4" stroke="#fff" stroke-width="2.1" fill="none"/>
<rect x="673.6" y="49.2" width="2.6" height="3.2" fill="#fff"/>
<!-- Format -->
<rect x="704" y="28.3" width="28.6" height="26.6" rx="1.5" fill="#b9b9b9" opacity="0.35"/>
<rect x="703.2" y="27.4" width="28.4" height="26.6" rx="1.6" fill="#ededed" stroke="#abc6e2" stroke-width="1.1"/>
<rect x="703.7" y="27.9" width="27.4" height="5.2" rx="1" fill="#b9d3ec"/>
<line x1="703.7" y1="33.2" x2="731.1" y2="33.2" stroke="#a6c0dc" stroke-width="0.8"/>
<line x1="714.4" y1="33.4" x2="714.4" y2="53.6" stroke="#b8d0e8" stroke-width="1"/>
<g stroke="#c8ccd0" stroke-width="0.9"><line x1="706" y1="36.5" x2="711.7" y2="36.5"/><line x1="706" y1="39.5" x2="711.7" y2="39.5"/><line x1="706" y1="42.5" x2="711.7" y2="42.5"/><line x1="706" y1="45.5" x2="711.7" y2="45.5"/><line x1="706" y1="48.5" x2="711.7" y2="48.5"/></g>
<rect x="717.4" y="36.3" width="11" height="12.3" fill="#ebebeb" stroke="#c6cbd0" stroke-width="0.8"/>
<!-- Data Info -->
<rect x="757" y="26.2" width="22.6" height="28.8" rx="3.8" fill="url(#gInfo)"/>
<path d="M760.5 26.2 Q757 26.2 756.6 30 V51.5 Q757 55 760.5 55 Z" fill="#46663a"/>
<rect x="760" y="26.4" width="17.5" height="2.2" rx="1" fill="#b9d2a6" opacity="0.8"/>
<path d="M762.9 46.1 L765.9 36.4 L768.9 46.1 M764 42.8 H767.8" stroke="#fff" stroke-width="1.9" fill="none" stroke-linejoin="round"/>
<path d="M771.4 42.5 Q773 41.4 774.4 42.6 V46.1" stroke="#f2f6ee" stroke-width="1.1" fill="none"/>
<ellipse cx="772.7" cy="44.7" rx="1.5" ry="1.2" stroke="#f2f6ee" stroke-width="1.1" fill="none"/>
<!-- Calculate -->
<rect x="898.6" y="35.2" width="4.3" height="11.7" rx="0.8" fill="url(#gCalc)" stroke="#4e8e26" stroke-width="0.8"/>
<path d="M905 35.2 H915 V26.8 L929.3 41 L915 55.2 V46.9 H905 Z" fill="url(#gCalc)" stroke="#4e8e26" stroke-width="0.9" stroke-linejoin="round"/>
</svg>

</div></body></html>
